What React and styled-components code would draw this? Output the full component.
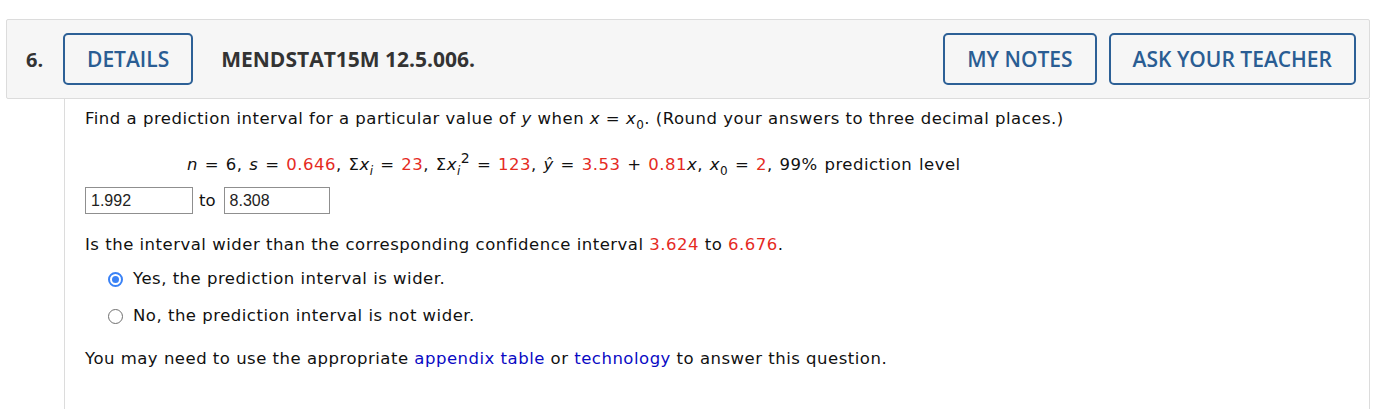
import React from "react";
import styled, { createGlobalStyle } from "styled-components";

const Global = createGlobalStyle`
  html, body { margin: 0; padding: 0; background: #fff; }
  body { font-family: "DejaVu Sans", Verdana, sans-serif; }
`;

const Page = styled.div`
  padding: 19px 9px 0 6px;
`;

const Header = styled.div`
  display: flex;
  align-items: center;
  height: 78px;
  background: #f6f6f6;
  border: 1px solid #dcdcdc;
  border-radius: 2px;
  padding: 0 13px 0 19px;
  font-family: "Open Sans", sans-serif;
`;

const Num = styled.div`
  font-size: 20px;
  font-weight: 700;
  color: #333;
  width: 37px;
`;

const Btn = styled.button`
  height: 52px;
  padding: 0 ${(p) => p.$pad}px;
  background: transparent;
  border: 2px solid #2d6096;
  border-radius: 5px;
  font-family: "Open Sans", sans-serif;
  font-size: 21px;
  font-weight: 600;
  color: #2a5d93;
  cursor: pointer;
  margin-left: ${(p) => p.$ml || 0}px;
`;

const Title = styled.div`
  font-size: 21px;
  font-weight: 700;
  color: #333;
  margin-left: 28px;
  flex: 1;
`;

const Body = styled.div`
  margin-left: 58px;
  border-left: 1px solid #dcdcdc;
  border-right: 1px solid #dcdcdc;
  padding: 10px 20px 40px 20px;
  font-size: 16.5px;
  letter-spacing: 0.5px;
  color: #111;
`;

const Line = styled.div`
  line-height: 20px;
  margin-top: ${(p) => p.$mt || 0}px;
  padding-left: ${(p) => p.$indent || 0}px;
  word-spacing: ${(p) => p.$ws || 0}px;
  white-space: nowrap;
`;

const Var = styled.i`
  font-style: italic;
`;

const Red = styled.span`
  color: #e52b1f;
`;

const Sub = styled.sub`
  font-size: 12px;
  line-height: 0;
  vertical-align: -5px;
`;

const Sup = styled.sup`
  font-size: 14px;
  line-height: 0;
  vertical-align: 7px;
`;

const Link = styled.a`
  color: #0a0ac4;
  text-decoration: none;
`;

const AnswerRow = styled.div`
  display: flex;
  align-items: center;
  margin-top: 12px;
`;

const Field = styled.div`
  box-sizing: border-box;
  width: ${(p) => p.$w}px;
  height: 27px;
  border: 1px solid #8f8f8f;
  font-family: "Liberation Sans", Arial, sans-serif;
  font-size: 16px;
  letter-spacing: 0;
  color: #222;
  display: flex;
  align-items: center;
  padding-left: 5px;
`;

const To = styled.span`
  margin: 0 8px 0 6px;
  letter-spacing: 0;
`;

const Options = styled.div`
  display: flex;
  flex-direction: column;
  gap: 17px;
  margin-top: 14px;
  padding-left: 23px;
`;

const Option = styled.label`
  display: flex;
  align-items: center;
  line-height: 20px;
`;

const Radio = styled.span`
  box-sizing: border-box;
  width: 15px;
  height: 15px;
  border-radius: 50%;
  margin-right: 10px;
  display: inline-flex;
  align-items: center;
  justify-content: center;
  background: #fff;
  border: ${(p) => (p.$on ? "2px solid #3a82f6" : "1px solid #6f6f6f")};
  &::after {
    content: "";
    display: ${(p) => (p.$on ? "block" : "none")};
    width: 7px;
    height: 7px;
    border-radius: 50%;
    background: #3a82f6;
  }
`;

export default function App() {
  return (
    <>
      <Global />
      <Page>
        <Header>
          <Num>6.</Num>
          <Btn $pad={22}>DETAILS</Btn>
          <Title>MENDSTAT15M 12.5.006.</Title>
          <Btn $pad={22}>MY NOTES</Btn>
          <Btn $pad={22} $ml={12}>ASK YOUR TEACHER</Btn>
        </Header>
        <Body>
          <Line>
            Find a prediction interval for a particular value of <Var>y</Var> when{" "}
            <Var>x</Var> = <Var>x</Var>
            <Sub>0</Sub>. (Round your answers to three decimal places.)
          </Line>
          <Line $mt={26} $indent={102} $ws={1}>
            <Var>n</Var> = 6, <Var>s</Var> = <Red>0.646</Red>, Σ<Var>x</Var>
            <Sub><Var>i</Var></Sub> = <Red>23</Red>, Σ<Var>x</Var>
            <Sub><Var>i</Var></Sub>
            <Sup>2</Sup> = <Red>123</Red>, <Var>ŷ</Var> = <Red>3.53</Red> +{" "}
            <Red>0.81</Red>
            <Var>x</Var>, <Var>x</Var>
            <Sub>0</Sub> = <Red>2</Red>, 99% prediction level
          </Line>
          <AnswerRow>
            <Field $w={108}>1.992</Field>
            <To>to</To>
            <Field $w={106}>8.308</Field>
          </AnswerRow>
          <Line $mt={21}>
            Is the interval wider than the corresponding confidence interval{" "}
            <Red>3.624</Red> to <Red>6.676</Red>.
          </Line>
          <Options>
            <Option>
              <Radio $on />
              Yes, the prediction interval is wider.
            </Option>
            <Option>
              <Radio />
              No, the prediction interval is not wider.
            </Option>
          </Options>
          <Line $mt={23}>
            You may need to use the appropriate <Link href="#">appendix table</Link> or{" "}
            <Link href="#">technology</Link> to answer this question.
          </Line>
        </Body>
      </Page>
    </>
  );
}
